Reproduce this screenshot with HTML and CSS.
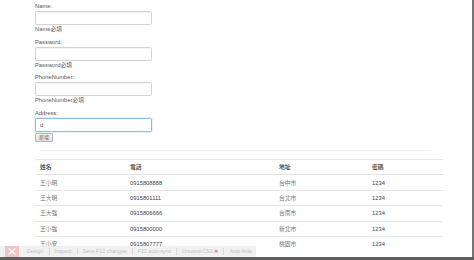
FILE: index.html
```html
<!DOCTYPE html>
<html>
<head>
<meta charset="utf-8">
<link rel="stylesheet" href="styles.css">
</head>
<body>
<div class="window">
  <div class="viewport">
    <main class="page">
      <form class="form">
        <div class="group">
          <label class="label">Name:</label>
          <input class="field" type="text">
          <span class="hint">Name必填</span>
        </div>
        <div class="group">
          <label class="label">Password:</label>
          <input class="field" type="text">
          <span class="hint">Password必填</span>
        </div>
        <div class="group">
          <label class="label">PhoneNumber:</label>
          <input class="field" type="text">
          <span class="hint">PhoneNumber必填</span>
        </div>
        <div class="group last">
          <label class="label">Address:</label>
          <input class="field focused" type="text" value="d">
          <button class="btn" type="button">新增</button>
        </div>
      </form>
      <hr class="rule">
      <table class="grid">
        <thead>
          <tr><th class="c1">姓名</th><th class="c2">電話</th><th class="c3">地址</th><th class="c4">密碼</th></tr>
        </thead>
        <tbody>
          <tr><td class="cjk">王小明</td><td>0915808888</td><td class="cjk">台中市</td><td>1234</td></tr>
          <tr><td class="cjk">王大明</td><td>0915801111</td><td class="cjk">台北市</td><td>1234</td></tr>
          <tr><td class="cjk">王大強</td><td>0915806666</td><td class="cjk">台南市</td><td>1234</td></tr>
          <tr><td class="cjk">王小強</td><td>0915800000</td><td class="cjk">新北市</td><td>1234</td></tr>
          <tr><td class="cjk">王小安</td><td>0915807777</td><td class="cjk">桃園市</td><td>1234</td></tr>
        </tbody>
      </table>
    </main>
    <div class="toolbar">
      <span class="tb-logo">
        <svg width="14" height="11" viewBox="0 0 14 11"><rect width="14" height="11" fill="#f4c4c4"/><path d="M4 3 L10 8 M10 3 L4 8" stroke="#fff" stroke-width="1.4"/><path d="M3 2.5h2M9 2.5h2M3 8.5h2M9 8.5h2" stroke="#fbe3e3" stroke-width="1"/></svg>
      </span>
      <span class="tb-item">Design</span><span class="tb-sep"></span>
      <span class="tb-item">Inspect</span><span class="tb-sep"></span>
      <span class="tb-item">Save F12 changes</span><span class="tb-sep"></span>
      <span class="tb-item">F12 auto-sync</span><span class="tb-sep"></span>
      <span class="tb-item">Unused CSS <span class="tb-x">✖</span></span><span class="tb-sep"></span>
      <span class="tb-item">Auto-hide</span>
    </div>
  </div>
  <div class="frame-bottom"></div>
</div>
</body>
</html>
```
FILE: styles.css
```css
html, body {
  margin: 0;
  padding: 0;
  background: #fff;
}
body {
  font-family: "Liberation Sans", Arial, "Noto Sans CJK TC", sans-serif;
  color: #555;
}
.window {
  width: 474px;
  height: 260px;
  display: flex;
  flex-direction: column;
}
.viewport {
  position: relative;
  flex: 1;
  overflow: hidden;
  border-right: 2px solid #747474;
}
.frame-bottom {
  height: 3px;
  background: #5e5e5e;
}
.page {
  padding: 2px 0 0 35px;
}
.form {
  margin: 0;
}
.group {
  display: flex;
  flex-direction: column;
  align-items: flex-start;
  margin-bottom: 4.5px;
}
.group.last {
  margin-bottom: 0;
}
.label {
  display: block;
  font-size: 5.8px;
  line-height: 8px;
  margin-bottom: 1px;
  color: #555;
}
.hint {
  display: block;
  font-size: 5.8px;
  line-height: 8px;
  color: #5a5a5a;
}
.field {
  box-sizing: border-box;
  width: 117px;
  height: 14px;
  margin: 0;
  padding: 0 4px;
  border: 1px solid #d2d2d2;
  border-radius: 1.5px;
  font-family: "Liberation Sans", Arial, sans-serif;
  font-size: 6px;
  color: #555;
  background: #fff;
  box-shadow: inset 0 1px 1px rgba(0,0,0,.04);
  outline: none;
}
.field.focused {
  border-color: #8dbbe6;
  box-shadow: 0 0 2px rgba(102,175,233,.6);
}
.btn {
  box-sizing: border-box;
  margin-top: 1px;
  width: 18px;
  height: 9.5px;
  padding: 0;
  border: 1px solid #b4b4b4;
  border-radius: 1px;
  background: linear-gradient(#f6f6f6, #e2e2e2);
  font-family: "Liberation Sans", "Noto Sans CJK TC", sans-serif;
  font-size: 5px;
  line-height: 7px;
  color: #666;
}
.rule {
  margin: 8px 0 8px 5px;
  width: 391px;
  border: 0;
  border-top: 1px solid #f0f0f0;
  height: 0;
}
.grid {
  width: 408px;
  border-collapse: collapse;
  font-size: 5.8px;
}
.grid th, .grid td {
  text-align: left;
  padding: 3.2px 5px;
  line-height: 8px;
  border-top: 1px solid #e6e6e6;
  vertical-align: middle;
}
.grid th {
  font-weight: bold;
  color: #555;
  border-bottom: 1px solid #e2e2e2;
}
.grid td {
  color: #444;
}
.grid td.cjk {
  color: #777;
}
.c1 { width: 80px; }
.c2 { width: 139px; }
.c3 { width: 83px; }
.c4 { width: auto; }
.toolbar {
  position: absolute;
  left: 0;
  bottom: 0;
  height: 11px;
  width: 256px;
  display: flex;
  align-items: center;
  background: rgba(238,238,238,.85);
  font-size: 5.3px;
  color: #c2c2c2;
}
.tb-logo {
  display: flex;
  margin: 0 7px 0 5px;
}
.tb-item {
  white-space: nowrap;
  line-height: 9px;
  padding: 0 1px;
}
.tb-x {
  color: #e08a8a;
  font-size: 4.5px;
}
.tb-sep {
  width: 1px;
  height: 7px;
  background: #d8d8d8;
  margin: 0 4px;
}
```
